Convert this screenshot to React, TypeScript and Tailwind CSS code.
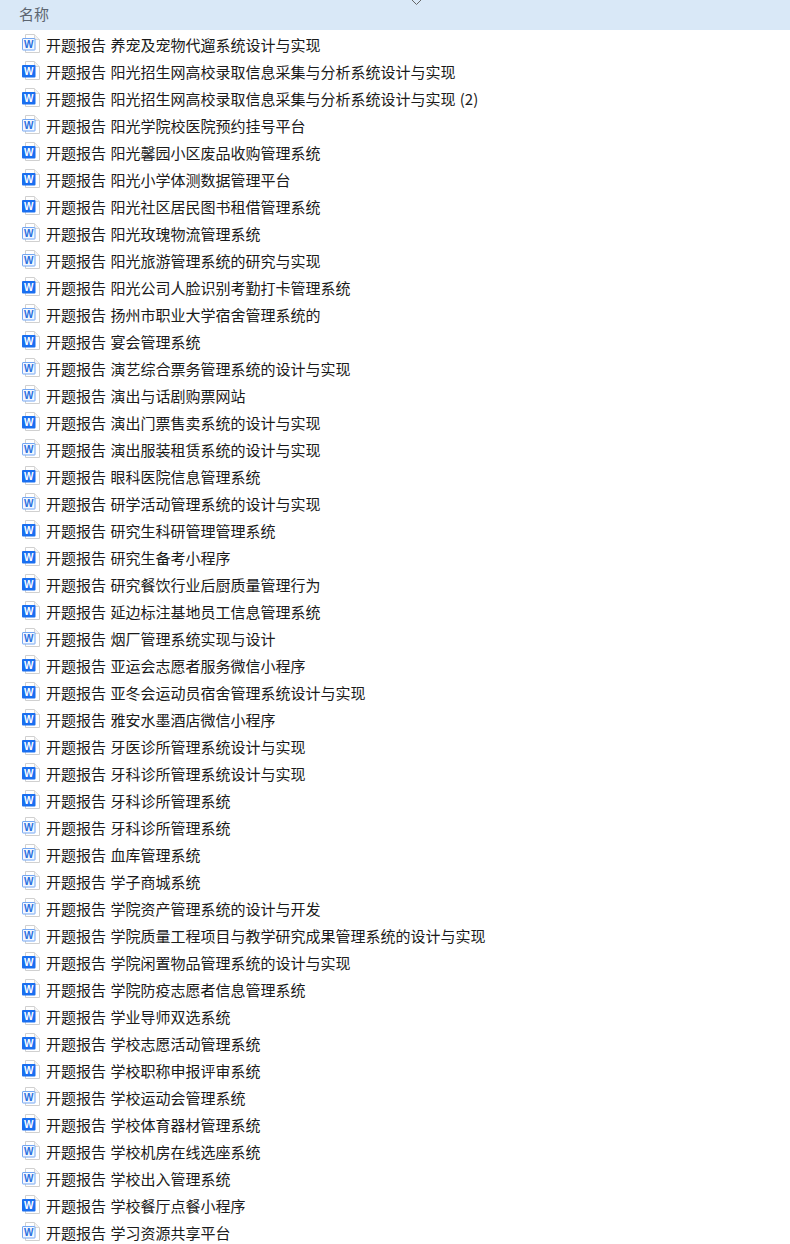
const rows: [string, boolean][] = [
  ["养宠及宠物代遛系统设计与实现", false],
  ["阳光招生网高校录取信息采集与分析系统设计与实现", true],
  ["阳光招生网高校录取信息采集与分析系统设计与实现 (2)", true],
  ["阳光学院校医院预约挂号平台", false],
  ["阳光馨园小区废品收购管理系统", true],
  ["阳光小学体测数据管理平台", true],
  ["阳光社区居民图书租借管理系统", true],
  ["阳光玫瑰物流管理系统", false],
  ["阳光旅游管理系统的研究与实现", false],
  ["阳光公司人脸识别考勤打卡管理系统", true],
  ["扬州市职业大学宿舍管理系统的", false],
  ["宴会管理系统", true],
  ["演艺综合票务管理系统的设计与实现", false],
  ["演出与话剧购票网站", false],
  ["演出门票售卖系统的设计与实现", true],
  ["演出服装租赁系统的设计与实现", false],
  ["眼科医院信息管理系统", true],
  ["研学活动管理系统的设计与实现", false],
  ["研究生科研管理管理系统", true],
  ["研究生备考小程序", true],
  ["研究餐饮行业后厨质量管理行为", true],
  ["延边标注基地员工信息管理系统", true],
  ["烟厂管理系统实现与设计", false],
  ["亚运会志愿者服务微信小程序", true],
  ["亚冬会运动员宿舍管理系统设计与实现", true],
  ["雅安水墨酒店微信小程序", true],
  ["牙医诊所管理系统设计与实现", true],
  ["牙科诊所管理系统设计与实现", true],
  ["牙科诊所管理系统", true],
  ["牙科诊所管理系统", false],
  ["血库管理系统", false],
  ["学子商城系统", false],
  ["学院资产管理系统的设计与开发", false],
  ["学院质量工程项目与教学研究成果管理系统的设计与实现", false],
  ["学院闲置物品管理系统的设计与实现", true],
  ["学院防疫志愿者信息管理系统", true],
  ["学业导师双选系统", true],
  ["学校志愿活动管理系统", true],
  ["学校职称申报评审系统", true],
  ["学校运动会管理系统", false],
  ["学校体育器材管理系统", true],
  ["学校机房在线选座系统", false],
  ["学校出入管理系统", false],
  ["学校餐厅点餐小程序", true],
  ["学习资源共享平台", false],
];

function WordIcon({ solid }: { solid: boolean }) {
  return (
    <svg width="18" height="19" viewBox="0 0 18 19" className="shrink-0">
      <path d="M3.5 .5H12.5L17.5 5.5V18.5H3.5Z" fill="#fff" stroke="#d0d0d0" />
      <path d="M12.5 .5V5.5H17.5" fill="#f2f2f2" stroke="#d8d8d8" />
      {solid ? (
        <rect x="0" y="4" width="13.5" height="12.5" rx="1" fill="#1a6ff0" />
      ) : (
        <rect x=".5" y="4.5" width="12.5" height="11.5" rx=".5" fill="#f3f8ff" stroke="#74a7f2" />
      )}
      <text
        x="6.75"
        y="13.8"
        textAnchor="middle"
        fontSize="10"
        fontWeight="700"
        fontFamily="'Liberation Sans', sans-serif"
        fill={solid ? "#ffffff" : "#2a6fe0"}
      >
        W
      </text>
    </svg>
  );
}

export default function App() {
  return (
    <div className="relative w-[790px] h-[1244px] overflow-hidden bg-white font-['Noto_Sans_CJK_SC','Noto_Sans',sans-serif]">
      <div className="relative flex h-[30px] items-center bg-[#d9e8f7] pl-[19px] pb-[2px] text-[15px] text-[#5c6570]">
        名称
        <svg width="11" height="6" viewBox="0 0 11 6" className="absolute left-[410.5px] top-0">
          <path d="M1 0L5.5 4.5L10 0" fill="none" stroke="#666" strokeWidth="1" />
        </svg>
      </div>
      <div className="flex flex-col pt-[1.5px]">
        {rows.map(([name, solid], i) => (
          <div key={i} className="flex h-[27px] items-center pl-[22px] text-[15px] text-[#1a1a1a] whitespace-nowrap">
            <span className="mb-[3px] flex">
              <WordIcon solid={solid} />
            </span>
            <span className="ml-[6px] [word-spacing:1px]">开题报告 {name}</span>
          </div>
        ))}
      </div>
    </div>
  );
}
